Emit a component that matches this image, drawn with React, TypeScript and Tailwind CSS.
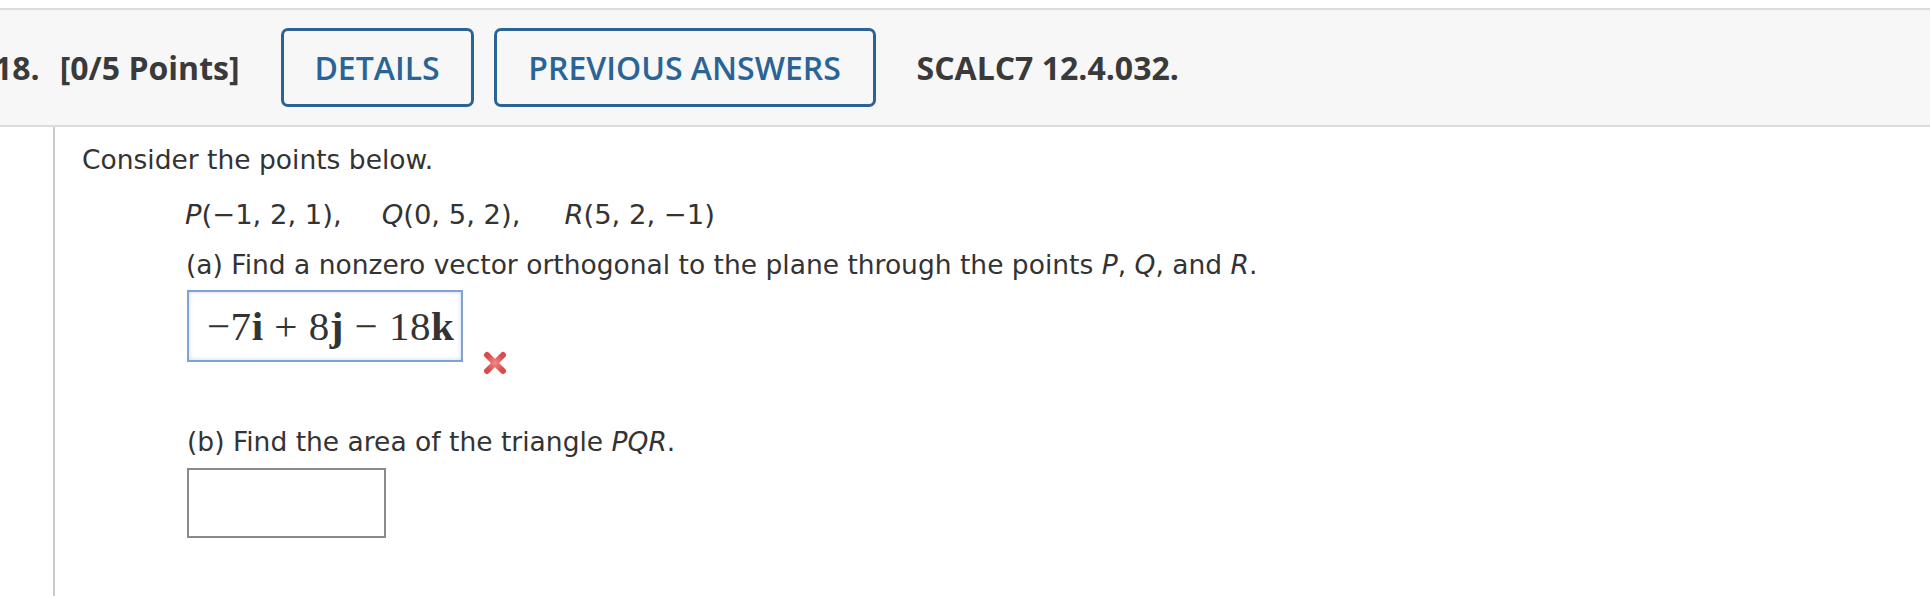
import React from "react";

function RedX() {
  return (
    <svg width="26" height="26" viewBox="0 0 26 26">
      <defs>
        <radialGradient id="xg" cx="50%" cy="50%" r="60%">
          <stop offset="0%" stopColor="#ef8a8a" />
          <stop offset="100%" stopColor="#dc4a4a" />
        </radialGradient>
      </defs>
      <path d="M5 5 L21 21 M21 5 L5 21" stroke="url(#xg)" strokeWidth="6" strokeLinecap="round" />
    </svg>
  );
}

export default function App() {
  return (
    <div className="w-[1930px] h-[596px] bg-white overflow-hidden text-[#333]">
      <div className="h-2" />
      {/* Header */}
      <div className="h-[119px] border-y-2 border-[#dcdcdc] bg-[#f7f7f7] flex items-center font-['Open_Sans',sans-serif] text-[32px] leading-none">
        <span className="font-bold ml-[-6px] text-[#3a3a3a]">18.</span>
        <span className="font-bold ml-[20px] text-[#3a3a3a]">[0/5 Points]</span>
        <button className="ml-[41px] h-[79px] w-[193px] border-[3px] border-[#2a6496] rounded-[7px] text-[#2a6496] font-semibold">
          DETAILS
        </button>
        <button className="ml-[20px] h-[79px] w-[382px] border-[3px] border-[#2a6496] rounded-[7px] text-[#2a6496] font-semibold">
          PREVIOUS ANSWERS
        </button>
        <span className="font-bold ml-[41px] text-[#3a3a3a]">SCALC7 12.4.032.</span>
      </div>
      {/* Body */}
      <div className="flex h-[469px]">
        <div className="w-[53px]" />
        <div className="border-l-2 border-[#cccccc] pl-[27px] pt-[18px] font-['DejaVu_Sans',sans-serif] text-[26.5px] leading-[30px]">
          <div>Consider the points below.</div>
          <div className="mt-[25px] ml-[103px] flex text-[27.4px]">
            <span>
              <i>P</i>(−1, 2, 1),
            </span>
            <span className="ml-[40px]">
              <i>Q</i>(0, 5, 2),
            </span>
            <span className="ml-[44px]">
              <i>R</i>(5, 2, −1)
            </span>
          </div>
          <div className="mt-[20px] ml-[104px]">
            (a) Find a nonzero vector orthogonal to the plane through the points <i>P</i>, <i>Q</i>, and <i>R</i>.
          </div>
          <div className="mt-[10px] ml-[105px] flex items-end">
            <div className="w-[276px] h-[72px] border-2 border-[#7fa3d1] shadow-[inset_0_0_4px_rgba(100,140,200,0.35)] flex items-center pl-[18px] font-['Liberation_Serif',serif] text-[41px] text-[#333] whitespace-pre tracking-[0.5px]">
              −7<b>i</b> + 8<b>j</b> − 18<b>k</b>
            </div>
            <div className="ml-[19px] mb-[-14px]">
              <RedX />
            </div>
          </div>
          <div className="mt-[65px] ml-[105px]">
            (b) Find the area of the triangle <i>PQR</i>.
          </div>
          <div className="mt-[11px] ml-[105px] w-[199px] h-[70px] border-2 border-[#8a8a8a]" />
        </div>
      </div>
    </div>
  );
}
